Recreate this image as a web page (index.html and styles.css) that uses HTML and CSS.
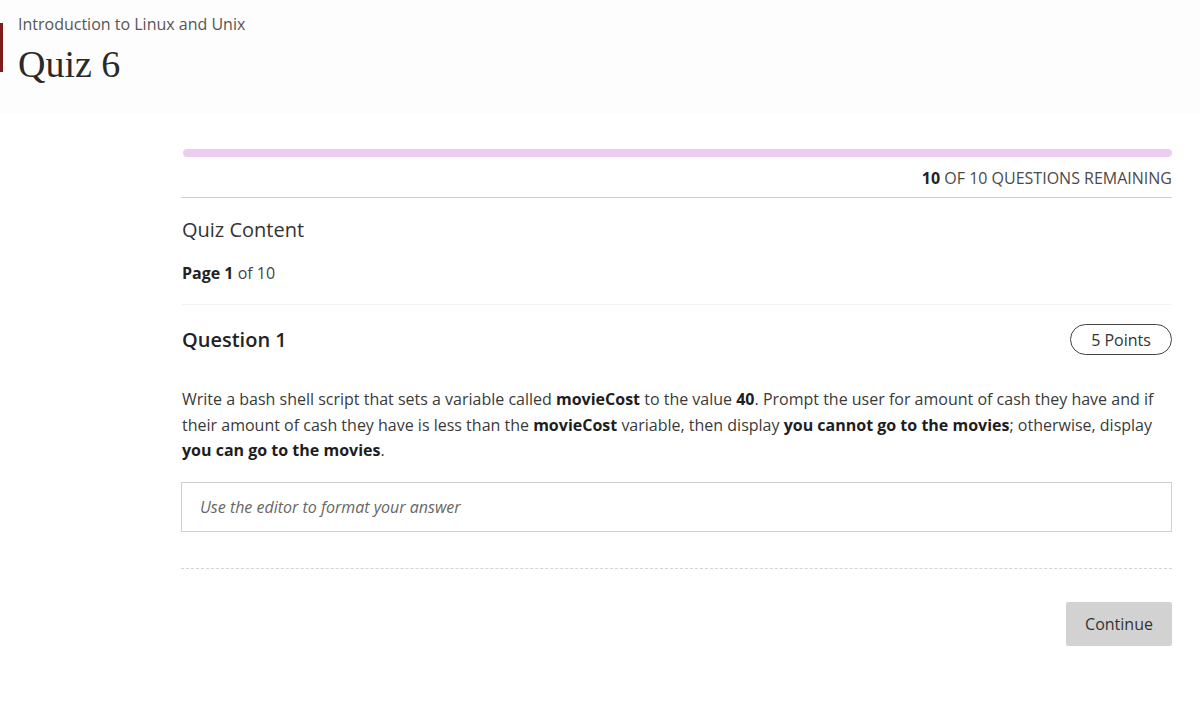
FILE: index.html
```html
<!DOCTYPE html>
<html lang="en">
<head>
<meta charset="utf-8">
<title>Quiz 6</title>
<link rel="stylesheet" href="styles.css">
</head>
<body>
<header class="page-header">
  <div class="course">Introduction to Linux and Unix</div>
  <h1 class="title">Quiz 6</h1>
</header>
<main class="quiz">
  <div class="progress"><div class="progress-fill"></div></div>
  <div class="remaining"><strong>10</strong> OF 10 QUESTIONS REMAINING</div>
  <h2 class="section-title">Quiz Content</h2>
  <div class="page-count"><strong>Page 1</strong> of 10</div>
  <section class="question">
    <div class="question-head">
      <h3 class="question-title">Question 1</h3>
      <span class="points">5 Points</span>
    </div>
    <p class="question-text">Write a bash shell script that sets a variable called <strong>movieCost</strong> to the value <strong>40</strong>. Prompt the user for amount of cash they have and if their amount of cash they have is less than the <strong>movieCost</strong> variable, then display <strong>you cannot go to the movies</strong>; otherwise, display <strong>you can go to the movies</strong>.</p>
    <div class="answer">Use the editor to format your answer</div>
  </section>
  <div class="actions">
    <button class="continue" type="button">Continue</button>
  </div>
</main>
</body>
</html>
```
FILE: styles.css
```css
html, body {
  margin: 0;
  padding: 0;
  background: #ffffff;
}
body {
  font-family: "Open Sans", "Liberation Sans", sans-serif;
  color: #333333;
}
.page-header {
  position: relative;
  height: 114px;
  box-sizing: border-box;
  padding: 13px 0 0 18px;
  background: #fdfdfd;
}
.page-header::before {
  content: "";
  position: absolute;
  left: 0;
  top: 23px;
  width: 3px;
  height: 49px;
  background: #7d1d1d;
}
.course {
  font-size: 16px;
  line-height: 22px;
  color: #555555;
}
.title {
  margin: 7px 0 0;
  font-family: "Liberation Serif", "Times New Roman", serif;
  font-weight: 400;
  font-size: 38px;
  line-height: 44px;
  color: #2a2a2a;
}
.quiz {
  margin-left: 181px;
  width: 991px;
  padding-top: 35px;
}
.progress {
  margin: 0 0 0 2px;
  height: 8px;
  border-radius: 4px;
  background: #ecccf0;
  overflow: hidden;
}
.progress-fill {
  width: 0;
  height: 100%;
}
.remaining {
  margin-top: 11px;
  padding-bottom: 9px;
  border-bottom: 1px solid #cfcfcf;
  text-align: right;
  font-size: 16px;
  line-height: 20px;
  color: #4a4a4a;
}
.remaining strong {
  font-weight: 700;
  color: #222222;
}
.section-title {
  margin: 19px 0 0 1px;
  font-size: 20px;
  line-height: 26px;
  font-weight: 400;
  color: #333333;
}
.page-count {
  margin: 19px 0 0 1px;
  font-size: 16px;
  line-height: 22px;
  color: #444444;
  padding-bottom: 20px;
  border-bottom: 1px solid #f3f3f3;
}
.page-count strong {
  font-weight: 700;
  color: #222222;
}
.question-head {
  margin-top: 19px;
  display: flex;
  align-items: center;
  justify-content: space-between;
}
.question-title {
  margin: 0 0 0 1px;
  font-size: 20px;
  line-height: 26px;
  font-weight: 600;
  color: #222222;
}
.points {
  box-sizing: border-box;
  width: 102px;
  height: 31px;
  border: 1px solid #444444;
  border-radius: 16px;
  display: flex;
  align-items: center;
  justify-content: center;
  font-size: 16px;
  color: #333333;
}
.question-text {
  margin: 32px 0 0 1px;
  font-size: 16px;
  line-height: 25.5px;
  color: #3a3a3a;
}
.question-text strong {
  font-weight: 700;
  color: #1e1e1e;
}
.answer {
  margin-top: 18px;
  box-sizing: border-box;
  height: 50px;
  border: 1px solid #d0d0d0;
  display: flex;
  align-items: center;
  padding-left: 18px;
  font-size: 16px;
  font-style: italic;
  color: #666666;
}
.actions {
  margin-top: 36px;
  border-top: 1px dashed #d4d4d4;
  padding-top: 33px;
  display: flex;
  justify-content: flex-end;
}
.continue {
  width: 106px;
  height: 44px;
  border: none;
  border-radius: 2px;
  background: #d2d2d2;
  font-family: "Open Sans", "Liberation Sans", sans-serif;
  font-size: 16px;
  color: #333333;
  padding: 0;
}
```
